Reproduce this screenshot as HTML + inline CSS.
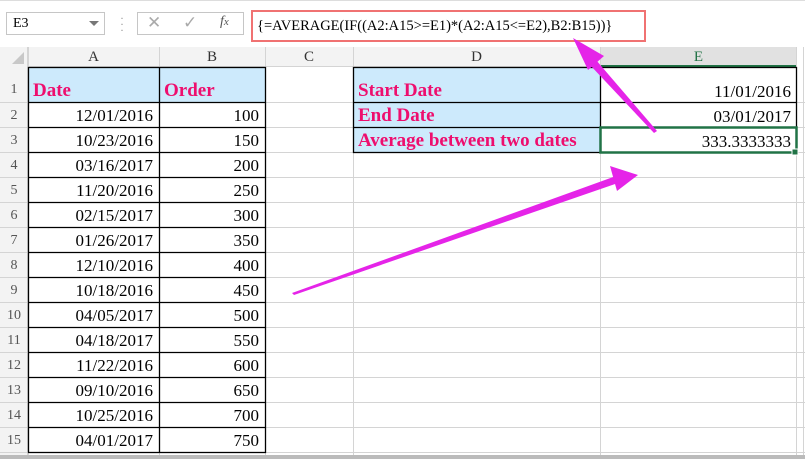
<!DOCTYPE html><html><head><style>
body{margin:0;width:805px;height:459px;overflow:hidden;background:#fff;position:relative;font-family:"Liberation Serif",serif}
.a{position:absolute;box-sizing:border-box}
.t{font-size:17px;color:#000;text-align:right;padding-right:6px;line-height:25px}
.h{font-size:19px;color:#ee0e6e;font-weight:bold;padding-left:4px;white-space:nowrap}
.rh{font-size:14px;color:#555;text-align:center;width:28px;left:0}
.ch{font-size:15px;color:#333;text-align:center;top:47px;height:20px;line-height:20px}
</style></head><body>
<div class="a" style="left:0;top:0;width:805px;height:46px;background:#fff;border-top:1px solid #ddd"></div>
<div class="a" style="left:6px;top:12px;width:99px;height:23px;border:1px solid #c6c6c6;font:14px 'Liberation Serif';padding:3px 6px">E3</div>
<div class="a" style="left:89px;top:21px;width:0;height:0;border-left:5px solid transparent;border-right:5px solid transparent;border-top:5px solid #777"></div>
<div class="a" style="left:120px;top:15px;color:#999;font-size:12px;line-height:6px">·<br>·<br>·</div>
<div class="a" style="left:137px;top:12px;width:107px;height:23px;border:1px solid #c6c6c6"></div>
<div class="a" style="left:147px;top:13px;color:#aaa;font:17px 'Liberation Sans'">✕</div>
<div class="a" style="left:183px;top:13px;color:#aaa;font:17px 'Liberation Sans'">✓</div>
<div class="a" style="left:220px;top:14px;color:#555;font:italic 14px 'Liberation Serif'">f<span style="font-size:11px">x</span></div>
<div class="a" style="left:251px;top:10px;width:395px;height:32px;border:2px solid #f07272;font-size:14.5px;padding:6px 4px;white-space:nowrap">{=AVERAGE(IF((A2:A15&gt;=E1)*(A2:A15&lt;=E2),B2:B15))}</div>
<div class="a" style="left:0;top:47px;width:797px;height:20px;background:#f3f3f3;border-bottom:1px solid #d4d4d4"></div>
<div class="a" style="left:0;top:47px;width:28px;height:412px;background:#f3f3f3;border-right:1px solid #d4d4d4"></div>
<div class="a" style="left:12px;top:52px;width:0;height:0;border-left:12px solid transparent;border-bottom:12px solid #c8c8c8"></div>
<div class="a" style="left:600px;top:47px;width:197px;height:20px;background:#e1e1e1;border-bottom:2px solid #217346"></div>
<div class="a ch" style="left:28px;width:131px">A</div>
<div class="a ch" style="left:159px;width:106px">B</div>
<div class="a ch" style="left:265px;width:88px">C</div>
<div class="a ch" style="left:353px;width:247px">D</div>
<div class="a ch" style="left:600px;width:197px;color:#217346">E</div>
<svg class="a" style="left:0;top:0" width="805" height="459">
<g stroke="#d4d4d4" stroke-width="1">
<line x1="28.5" y1="47" x2="28.5" y2="459"/><line x1="159.5" y1="47" x2="159.5" y2="459"/><line x1="265.5" y1="47" x2="265.5" y2="459"/><line x1="353.5" y1="47" x2="353.5" y2="459"/><line x1="600.5" y1="47" x2="600.5" y2="459"/><line x1="796.5" y1="47" x2="796.5" y2="459"/><line x1="803.5" y1="47" x2="803.5" y2="459"/>
</g>
<g stroke="#d4d4d4">
<line x1="0" y1="102.5" x2="805" y2="102.5"/><line x1="0" y1="127.5" x2="805" y2="127.5"/><line x1="0" y1="152.5" x2="805" y2="152.5"/><line x1="0" y1="177.5" x2="805" y2="177.5"/><line x1="0" y1="202.5" x2="805" y2="202.5"/><line x1="0" y1="227.5" x2="805" y2="227.5"/><line x1="0" y1="252.5" x2="805" y2="252.5"/><line x1="0" y1="277.5" x2="805" y2="277.5"/><line x1="0" y1="302.5" x2="805" y2="302.5"/><line x1="0" y1="327.5" x2="805" y2="327.5"/><line x1="0" y1="352.5" x2="805" y2="352.5"/><line x1="0" y1="377.5" x2="805" y2="377.5"/><line x1="0" y1="402.5" x2="805" y2="402.5"/><line x1="0" y1="427.5" x2="805" y2="427.5"/><line x1="0" y1="452.5" x2="805" y2="452.5"/>
</g>
<rect x="29" y="67" width="236" height="35" fill="#cdeafc"/>
<rect x="354" y="67" width="246" height="85" fill="#cdeafc"/>
<g stroke="#000" stroke-width="1.3" fill="none">
<rect x="28.5" y="67.5" width="237" height="385"/>
<line x1="159.5" y1="67" x2="159.5" y2="452"/>
<line x1="28" y1="102.5" x2="266" y2="102.5"/><line x1="28" y1="127.5" x2="266" y2="127.5"/><line x1="28" y1="152.5" x2="266" y2="152.5"/><line x1="28" y1="177.5" x2="266" y2="177.5"/><line x1="28" y1="202.5" x2="266" y2="202.5"/><line x1="28" y1="227.5" x2="266" y2="227.5"/><line x1="28" y1="252.5" x2="266" y2="252.5"/><line x1="28" y1="277.5" x2="266" y2="277.5"/><line x1="28" y1="302.5" x2="266" y2="302.5"/><line x1="28" y1="327.5" x2="266" y2="327.5"/><line x1="28" y1="352.5" x2="266" y2="352.5"/><line x1="28" y1="377.5" x2="266" y2="377.5"/><line x1="28" y1="402.5" x2="266" y2="402.5"/><line x1="28" y1="427.5" x2="266" y2="427.5"/>
<rect x="353.5" y="67.5" width="443" height="85"/>
<line x1="600.5" y1="67" x2="600.5" y2="152"/>
<line x1="353" y1="102.5" x2="797" y2="102.5"/><line x1="353" y1="127.5" x2="797" y2="127.5"/>
</g>
<rect x="600.5" y="127.5" width="196" height="25" fill="none" stroke="#217346" stroke-width="2.5"/>
<rect x="792" y="149" width="6" height="6" fill="#217346" stroke="#fff" stroke-width="1"/>
<rect x="0" y="455" width="805" height="4" fill="#bbb"/>
<g fill="#e524e8">
<polygon points="657,131 596,60 590,65 654,133"/>
<polygon points="573,38 604,56 588,70"/>
<polygon points="292,293 616,176 618,183 294,295"/>
<polygon points="638,175 610,166 617,191"/>
</g>
</svg>
<div class="a rh" style="top:82px">1</div>
<div class="a rh" style="top:108px">2</div><div class="a rh" style="top:133px">3</div><div class="a rh" style="top:158px">4</div><div class="a rh" style="top:183px">5</div><div class="a rh" style="top:208px">6</div><div class="a rh" style="top:233px">7</div><div class="a rh" style="top:258px">8</div><div class="a rh" style="top:283px">9</div><div class="a rh" style="top:308px">10</div><div class="a rh" style="top:333px">11</div><div class="a rh" style="top:358px">12</div><div class="a rh" style="top:383px">13</div><div class="a rh" style="top:408px">14</div><div class="a rh" style="top:433px">15</div>
<div class="a h" style="left:29px;top:80px">Date</div>
<div class="a h" style="left:160px;top:80px">Order</div>
<div class="a h" style="left:354px;top:80px">Start Date</div>
<div class="a h" style="left:354px;top:105px">End Date</div>
<div class="a h" style="left:354px;top:130px">Average between two dates</div>
<div class="a t" style="left:600px;top:79px;width:197px">11/01/2016</div>
<div class="a t" style="left:600px;top:104px;width:197px">03/01/2017</div>
<div class="a t" style="left:600px;top:129px;width:197px">333.3333333</div>
<div class="a" style="left:28px;top:103px;width:131px" >
<div class="t">12/01/2016</div><div class="t">10/23/2016</div><div class="t">03/16/2017</div><div class="t">11/20/2016</div><div class="t">02/15/2017</div><div class="t">01/26/2017</div><div class="t">12/10/2016</div><div class="t">10/18/2016</div><div class="t">04/05/2017</div><div class="t">04/18/2017</div><div class="t">11/22/2016</div><div class="t">09/10/2016</div><div class="t">10/25/2016</div><div class="t">04/01/2017</div></div>
<div class="a" style="left:159px;top:103px;width:106px">
<div class="t">100</div><div class="t">150</div><div class="t">200</div><div class="t">250</div><div class="t">300</div><div class="t">350</div><div class="t">400</div><div class="t">450</div><div class="t">500</div><div class="t">550</div><div class="t">600</div><div class="t">650</div><div class="t">700</div><div class="t">750</div></div>
</body></html>
